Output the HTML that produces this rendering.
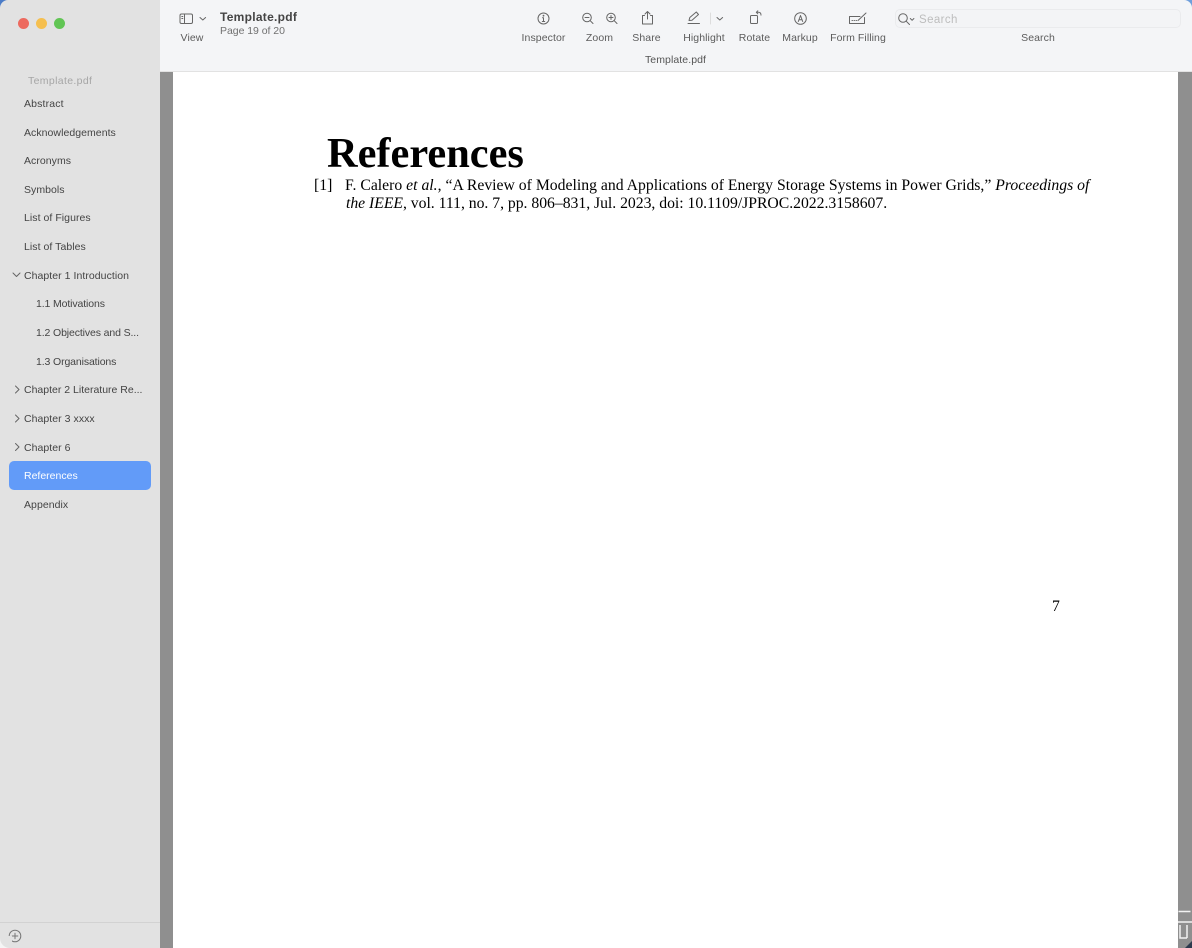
<!DOCTYPE html>
<html><head><meta charset="utf-8"><title>Template.pdf</title>
<style>
html,body{margin:0;padding:0;background:#fff}
#w{position:relative;width:1192px;height:948px;overflow:hidden;background:#8f8f8f;font-family:"Liberation Sans",sans-serif;filter:blur(.3px)}
#w div{position:absolute;white-space:nowrap}
.s{left:24px;font-size:10.5px;line-height:14px;color:#444;letter-spacing:.05px}
.i{left:36px;letter-spacing:-.12px}
.t{font-size:10.5px;line-height:14px;color:#5c5c5c;letter-spacing:.08px;transform:translateX(-50%)}
.b{font-family:"Liberation Serif",serif;font-size:15.72px;line-height:18px;color:#000}
svg{position:absolute;overflow:visible}
.ic{fill:none;stroke:#666;stroke-width:1;stroke-linecap:round;stroke-linejoin:round}
</style></head><body>
<div id="w">
<div style="left:173px;top:72px;width:1005px;height:876px;background:#fff"></div>
<div style="left:160px;top:0;width:1032px;height:71px;background:#f4f5f7;border-bottom:1px solid #e2e2e2"></div>
<div style="left:0;top:0;width:160px;height:948px;background:#e2e2e2"></div>
<div style="left:0;top:922px;width:160px;height:1px;background:#d2d2d2"></div>

<div style="left:18px;top:18px;width:11px;height:11px;border-radius:50%;background:#ed6a5f"></div>
<div style="left:36px;top:18px;width:11px;height:11px;border-radius:50%;background:#f5bf4f"></div>
<div style="left:54px;top:18px;width:11px;height:11px;border-radius:50%;background:#61c554"></div>

<div class="s" style="left:28px;top:74px;color:#a6a6a6;letter-spacing:.35px">Template.pdf</div>
<div class="s" style="top:97px;letter-spacing:.15px">Abstract</div>
<div class="s" style="top:125.5px">Acknowledgements</div>
<div class="s" style="top:154px">Acronyms</div>
<div class="s" style="top:183px">Symbols</div>
<div class="s" style="top:211px">List of Figures</div>
<div class="s" style="top:240px">List of Tables</div>
<div class="s" style="top:268.5px">Chapter 1 Introduction</div>
<div class="s i" style="top:297px">1.1 Motivations</div>
<div class="s i" style="top:326px">1.2 Objectives and S...</div>
<div class="s i" style="top:354.5px">1.3 Organisations</div>
<div class="s" style="top:383px;letter-spacing:0">Chapter 2 Literature Re...</div>
<div class="s" style="top:412px">Chapter 3 xxxx</div>
<div class="s" style="top:440.5px">Chapter 6</div>
<div style="left:9px;top:461px;width:141.5px;height:28.5px;border-radius:5px;background:#629bf8"></div>
<div class="s" style="top:469px;color:#fff;letter-spacing:0">References</div>
<div class="s" style="top:497.5px">Appendix</div>

<svg width="160" height="520" style="left:0;top:0">
<path class="ic" d="M13 273l3.500 3.500 3.500-3.500M15.500 386l3.500 3.500-3.500 3.500M15.500 415l3.500 3.500-3.500 3.500M15.500 443.500l3.500 3.500-3.500 3.500"/>
</svg>
<svg width="14" height="14" style="left:8px;top:928.5px">
<circle class="ic" cx="7" cy="7" r="5.800" style="stroke:#777"/><path class="ic" style="stroke:#777" d="M7 4.200v5.600M4.200 7h5.600"/>
</svg>

<svg width="1032" height="40" style="left:160px;top:0">
<g class="ic">
<rect x="20" y="14" width="12.500" height="9.500" rx="1.500"/><path d="M24.500 14v9.500M21.800 16.500h1M21.800 18.500h1"/>
<path d="M40 17.500l2.800 2.500 2.800-2.500"/>
<circle cx="383.500" cy="18.500" r="5.500"/><path d="M383.500 18v3.500M382.300 21.500h2.400M382.500 17.800h1"/><circle cx="383.500" cy="15.700" r=".4"/>
<circle cx="427" cy="17.500" r="4.300"/><path d="M430.200 20.700l2.800 2.800M425 17.500h4"/>
<circle cx="451" cy="17.500" r="4.300"/><path d="M454.200 20.700l2.800 2.800M449 17.500h4M451 15.500v4"/>
<path d="M484.500 15.500h-2v8.500h10v-8.500h-2M487.500 19V12M485 14l2.500-2.500 2.500 2.500"/>
<path d="M529 20.500l.8-3 6.500-5.500 2.200 2.500-6.500 5.700zM528 23.500h11.500"/>
<path d="M550.500 13v11" style="stroke:#ddd"/>
<path d="M557 17.500l2.800 2.500 2.800-2.500"/>
<rect x="590.500" y="15.500" width="7" height="8" rx="1"/><path d="M596.500 12.300h2c1.500 0 2.500 1 2.500 2.800M597.800 10.800l-1.500 1.500 1.500 1.500"/>
<circle cx="640.500" cy="18.500" r="5.800"/><path d="M638.300 21.500l2.200-6 2.200 6M639 19.800h3"/>
<path d="M700 16.500h-10.500v7h15v-6M692 20.500h.5M694 20.500h.5M696 20.500h.5M698 20.500l8-7.500"/>
</g>
</svg>

<div style="left:220px;top:10px;font-size:12px;line-height:15px;font-weight:bold;color:#444;letter-spacing:.28px">Template.pdf</div>
<div style="left:220px;top:25px;font-size:10.5px;line-height:13px;color:#707070;letter-spacing:-.04px">Page 19 of 20</div>
<div class="t" style="left:192px;top:31px">View</div>
<div class="t" style="left:543.5px;top:31px">Inspector</div>
<div class="t" style="left:599.5px;top:31px">Zoom</div>
<div class="t" style="left:646.5px;top:31px">Share</div>
<div class="t" style="left:704px;top:31px">Highlight</div>
<div class="t" style="left:754.5px;top:31px">Rotate</div>
<div class="t" style="left:800px;top:31px">Markup</div>
<div class="t" style="left:858px;top:31px">Form Filling</div>
<div class="t" style="left:1038px;top:31px">Search</div>
<div class="t" style="left:675.5px;top:53px;color:#555">Template.pdf</div>

<div style="left:895px;top:9px;width:284px;height:17px;border:1px solid #eaebed;border-radius:5px;background:#f3f4f6"></div>
<svg width="20" height="16" style="left:898px;top:11px">
<g class="ic"><circle cx="5" cy="7" r="4.300"/><path d="M8.200 10.200l3.300 3.300M12.300 7.500l1.800 1.800 1.800-1.800"/></g>
</svg>
<div style="left:919px;top:13px;font-size:11.5px;line-height:14px;color:#bdbdbd;letter-spacing:.4px">Search</div>

<div style="left:327px;top:130px;font-family:'Liberation Serif',serif;font-weight:bold;font-size:42.4px;line-height:48px;color:#000">References</div>
<div class="b" style="left:314px;top:177px">[1]</div>
<div class="b" style="left:345px;top:177px">F. Calero <i>et al.</i>, “A Review of Modeling and Applications of Energy Storage Systems in Power Grids,” <i>Proceedings of</i></div>
<div class="b" style="left:346px;top:195px;letter-spacing:-.025px"><i>the IEEE</i>, vol. 111, no. 7, pp. 806–831, Jul. 2023, doi: 10.1109/JPROC.2022.3158607.</div>
<div class="b" style="left:1052px;top:598px">7</div>

<svg width="16" height="38" style="left:1177px;top:910px">
<path d="M1.500 1.500h12M1 12h14M3 15v13h7M10 15v13" fill="none" stroke="#f2f2f2" stroke-width="1.500"/>
<path d="M15 38v-7l-7 7z" fill="#2d3a4d"/>
</svg>
<div style="left:0;top:936px;width:12px;height:12px;background:#f5f5f5"></div>
<div style="left:0;top:936px;width:12px;height:12px;background:#e2e2e2;border-bottom-left-radius:10px"></div>
<div style="left:0;top:0;width:8px;height:8px;background:#4b7cc7"></div>
<div style="left:0;top:0;width:8px;height:8px;background:#e2e2e2;border-top-left-radius:8px"></div>
<div style="left:1184px;top:0;width:8px;height:8px;background:#6f9fdc"></div>
<div style="left:1184px;top:0;width:8px;height:8px;background:#f4f5f7;border-top-right-radius:8px"></div>
</div>
</body></html>
